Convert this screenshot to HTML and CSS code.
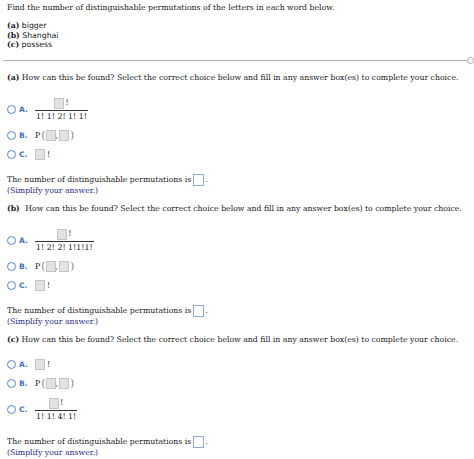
FILE: index.html
```html
<!DOCTYPE html>
<html>
<head>
<meta charset="utf-8">
<link rel="stylesheet" href="styles.css">
</head>
<body>
<div class="page">
  <p class="intro">Find the number of distinguishable permutations of the letters in each word below.</p>
  <div class="words">
    <div><b>(a)</b> <span class="sans">bigger</span></div>
    <div><b>(b)</b> <span class="sans">Shanghai</span></div>
    <div><b>(c)</b> <span class="sans">possess</span></div>
  </div>
  <div class="divider"><span class="knob"></span></div>

  <section class="part">
    <p class="q"><b>(a)</b> How can this be found? Select the correct choice below and fill in any answer box(es) to complete your choice.</p>
    <div class="choices">
      <div class="choice frac-row"><span class="radio"></span><span class="lbl">A.</span>
        <span class="frac"><span class="num"><span class="box"></span>!</span><span class="den">1! 1! 2! 1! 1!</span></span></div>
      <div class="choice"><span class="radio"></span><span class="lbl">B.</span>
        <span class="expr">P<span class="paren">(</span><span class="box"></span>,<span class="box"></span><span class="paren">)</span></span></div>
      <div class="choice"><span class="radio"></span><span class="lbl">C.</span>
        <span class="expr"><span class="box"></span>!</span></div>
    </div>
    <p class="result">The number of distinguishable permutations is <span class="ansbox"></span>.</p>
    <p class="hint">(Simplify your answer.)</p>
  </section>

  <section class="part">
    <p class="q"><b>(b)</b> <span class="sp"></span>How can this be found? Select the correct choice below and fill in any answer box(es) to complete your choice.</p>
    <div class="choices">
      <div class="choice frac-row"><span class="radio"></span><span class="lbl">A.</span>
        <span class="frac"><span class="num"><span class="box"></span>!</span><span class="den">1! 2! 2! 1!1!1!</span></span></div>
      <div class="choice"><span class="radio"></span><span class="lbl">B.</span>
        <span class="expr">P<span class="paren">(</span><span class="box"></span>,<span class="box"></span><span class="paren">)</span></span></div>
      <div class="choice"><span class="radio"></span><span class="lbl">C.</span>
        <span class="expr"><span class="box"></span>!</span></div>
    </div>
    <p class="result">The number of distinguishable permutations is <span class="ansbox"></span>.</p>
    <p class="hint">(Simplify your answer.)</p>
  </section>

  <section class="part">
    <p class="q"><b>(c)</b> How can this be found? Select the correct choice below and fill in any answer box(es) to complete your choice.</p>
    <div class="choices">
      <div class="choice"><span class="radio"></span><span class="lbl">A.</span>
        <span class="expr"><span class="box"></span>!</span></div>
      <div class="choice"><span class="radio"></span><span class="lbl">B.</span>
        <span class="expr">P<span class="paren">(</span><span class="box"></span>,<span class="box"></span><span class="paren">)</span></span></div>
      <div class="choice frac-row"><span class="radio"></span><span class="lbl">C.</span>
        <span class="frac"><span class="num"><span class="box"></span>!</span><span class="den">1! 1! 4! 1!</span></span></div>
    </div>
    <p class="result">The number of distinguishable permutations is <span class="ansbox"></span>.</p>
    <p class="hint">(Simplify your answer.)</p>
  </section>
</div>
</body>
</html>
```

FILE: styles.css
```css
html, body {
  margin: 0;
  padding: 0;
  background: #ffffff;
}
body {
  font-family: "DejaVu Serif", serif;
  font-size: 7.75px;
  line-height: 10px;
  color: #1a1a1a;
  overflow: hidden;
}
.page {
  padding: 3px 0 0 7px;
}
p {
  margin: 0;
}
b {
  font-weight: bold;
}
.sans {
  font-family: "DejaVu Sans", sans-serif;
}
.sp {
  display: inline-block;
  width: 3px;
}
.intro {
  margin-bottom: 8px;
}
.words {
  line-height: 9.5px;
}
.divider {
  position: relative;
  height: 1px;
  background: #b0b0b0;
  margin: 10px 6px 0 -4px;
}
.knob {
  position: absolute;
  right: -6px;
  top: -3px;
  width: 5px;
  height: 5px;
  border: 1px solid #a8a8a8;
  border-radius: 50%;
  background: #fff;
}
.part {
  padding-top: 12px;
}
.part + .part {
  padding-top: 8px;
}
.q {
  margin-bottom: 14px;
  white-space: nowrap;
}
.choices {
  display: flex;
  flex-direction: column;
  gap: 7px;
}
.choice {
  display: flex;
  align-items: center;
  height: 12px;
}
.choice.frac-row {
  height: 26px;
}
.radio {
  width: 7px;
  height: 7px;
  border: 1px solid #5585d2;
  border-radius: 50%;
  flex: none;
}
.lbl {
  font-family: "DejaVu Sans", sans-serif;
  font-weight: bold;
  font-size: 7.5px;
  color: #3c6fc7;
  margin-left: 3px;
  width: 16px;
  flex: none;
}
.frac {
  display: inline-flex;
  flex-direction: column;
  align-items: center;
}
.num {
  display: flex;
  align-items: flex-start;
  padding-bottom: 1px;
  border-bottom: 1px solid #333;
  align-self: stretch;
  justify-content: center;
}
.num .box {
  margin-right: 1px;
}
.den {
  padding: 1px 1px 0;
  white-space: nowrap;
  font-size: 7.9px;
  line-height: 9px;
}
.box {
  display: inline-block;
  width: 10px;
  height: 11px;
  background: #e2e2e2;
  border: 1px solid #c4c4c4;
  box-sizing: border-box;
}
.expr {
  display: inline-flex;
  align-items: center;
}
.expr .box + .box {
  margin-left: 1px;
}
.expr > .box:first-child {
  margin-right: 2px;
}
.paren {
  font-size: 11px;
  color: #888;
  margin: 0 0 0 1px;
}
.result {
  margin-top: 13px;
  display: flex;
  align-items: center;
}
.ansbox {
  display: inline-block;
  width: 11px;
  height: 12px;
  border: 1px solid #8fa9d6;
  box-sizing: border-box;
  background: #fff;
  margin: 0 1px 0 2px;
}
.hint {
  color: #2b2b8a;
}
```
